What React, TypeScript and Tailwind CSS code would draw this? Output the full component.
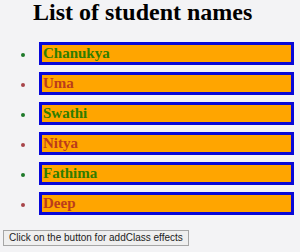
const students = ["Chanukya", "Uma", "Swathi", "Nitya", "Fathima", "Deep"];

export default function App() {
  return (
    <div className="w-[300px] h-[252px] bg-[#f3f3f5] overflow-hidden" style={{ fontFamily: '"Liberation Serif", serif' }}>
      <h1 className="pl-[33px] text-[24px] leading-[24px] font-bold text-black">List of student names</h1>

      <ul className="mt-[18px] flex flex-col gap-[7px]">
        {students.map((name, i) => {
          const odd = i % 2 === 0;
          return (
            <li key={name} className="flex items-center pl-[21px]">
              <span className={`mt-[2px] w-[4px] h-[4px] rounded-full ${odd ? "bg-[#1f7a2a]" : "bg-[#a8454a]"}`} />
              <div
                className={`ml-[14px] w-[255px] h-[23px] border-[3px] border-[#0808d8] bg-[#ffa500] pl-px text-[15px] leading-[17px] font-bold ${
                  odd ? "text-[#2f7d00]" : "text-[#bb3c1c]"
                }`}
              >
                {name}
              </div>
            </li>
          );
        })}
      </ul>

      <button
        className="mt-[15px] ml-[3px] h-[16px] px-[5px] border border-[#a6a6a6] bg-[#efefef] text-[10px] leading-[14px] text-[#222]"
        style={{ fontFamily: '"Liberation Sans", Arial, sans-serif' }}
      >
        Click on the button for addClass effects
      </button>
    </div>
  );
}
